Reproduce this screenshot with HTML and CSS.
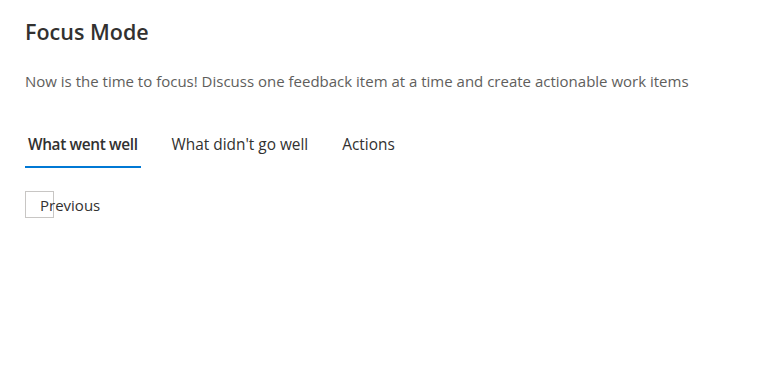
FILE: index.html
```html
<!DOCTYPE html>
<html>
<head>
<meta charset="utf-8">
<link rel="stylesheet" href="styles.css">
</head>
<body>
<div class="page">
  <h1 class="title">Focus Mode</h1>
  <p class="desc">Now is the time to focus! Discuss one feedback item at a time and create actionable work items</p>
  <div class="tabs">
    <div class="tab active">What went well</div>
    <div class="tab">What didn't go well</div>
    <div class="tab">Actions</div>
  </div>
  <div class="nav">
    <button class="prev"><span class="prev-label">Previous</span></button>
  </div>
</div>
</body>
</html>
```
FILE: styles.css
```css
html, body {
  margin: 0;
  padding: 0;
  background: #ffffff;
}
body {
  font-family: "Open Sans", "Noto Sans", sans-serif;
  color: #333333;
}
.page {
  padding: 18px 25px 0 25px;
}
.title {
  margin: 0;
  font-size: 21.5px;
  font-weight: 600;
  line-height: 28px;
  color: #323130;
}
.desc {
  margin: 25px 0 0 0;
  font-size: 15px;
  line-height: 20px;
  color: #605e5c;
}
.tabs {
  display: flex;
  margin-top: 33px;
}
.tab {
  font-size: 15.4px;
  line-height: 20px;
  padding: 11px 3px 11px 3px;
  margin-right: 28px;
  color: #323130;
  border-bottom: 2px solid transparent;
}
.tab.active {
  font-weight: 600;
  letter-spacing: -0.36px;
  border-bottom-color: #0078d4;
}
.nav {
  margin-top: 23px;
}
.prev {
  width: 29px;
  height: 27px;
  padding: 0;
  margin: 0;
  background: #ffffff;
  border: 1px solid #c8c6c4;
  overflow: visible;
  font-family: inherit;
  font-size: 15px;
  color: #323130;
  text-align: left;
  white-space: nowrap;
}
.prev-label {
  display: inline-block;
  padding-left: 14px;
}
```
